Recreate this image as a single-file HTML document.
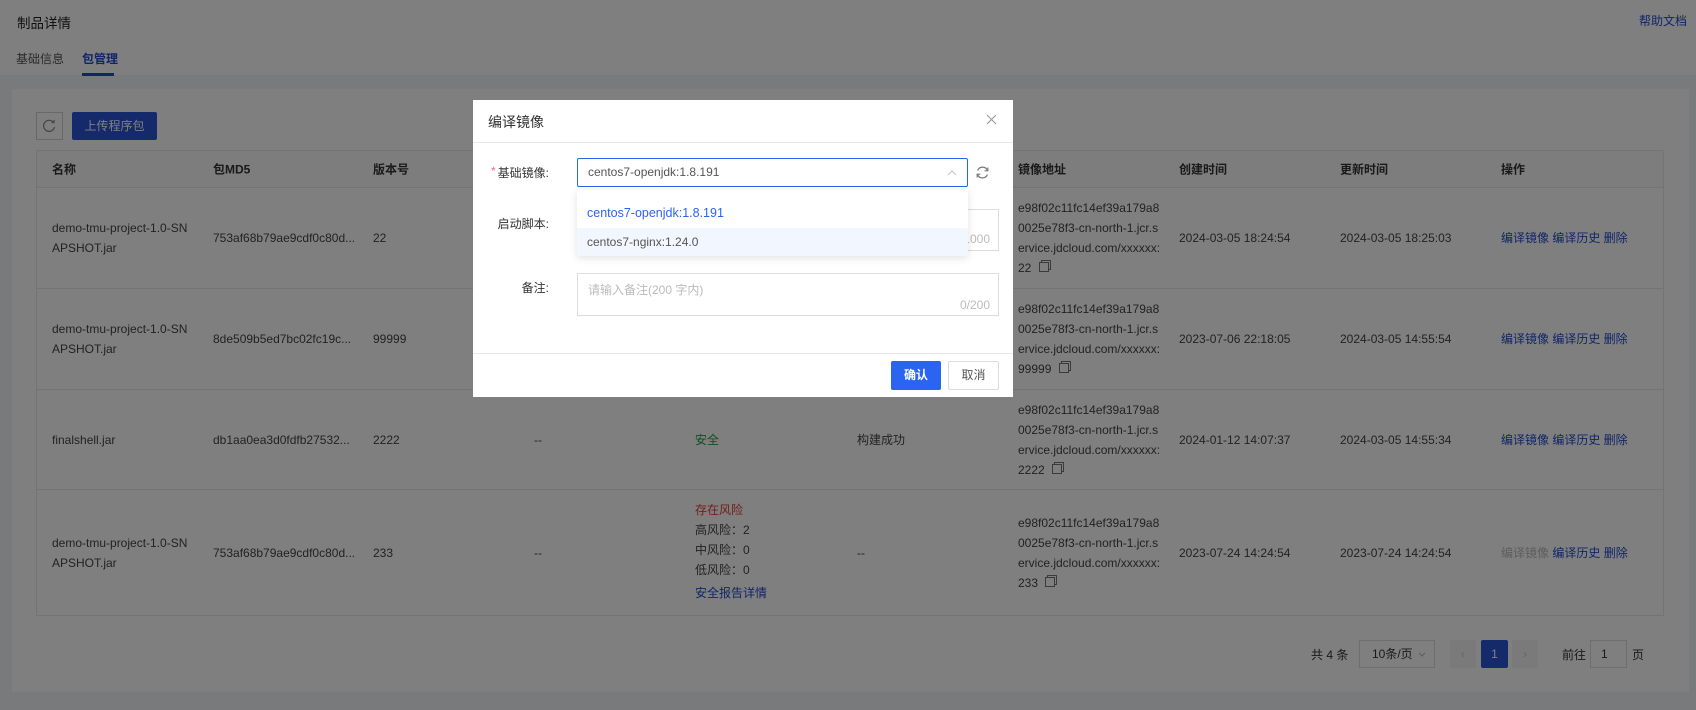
<!DOCTYPE html>
<html><head><meta charset="utf-8">
<style>
*{box-sizing:border-box;margin:0;padding:0}
body{width:1696px;height:710px;overflow:hidden;background:#f3f4f7;font-family:"Liberation Sans","Noto Sans CJK SC",sans-serif;font-size:12px;color:#333;position:relative}
.abs{position:absolute}
.hdr{left:0;top:0;width:1696px;height:75px;background:#fff}
.card{left:12px;top:89px;width:1677px;height:603px;background:#fff}
.tbl{left:36px;top:150px;width:1628px;height:466px;border:1px solid #e8e8e8}
.th{position:absolute;top:0;height:37px;width:1626px;background:#fafafa;border-bottom:1px solid #e8e8e8}
.cell{position:absolute;line-height:20px;color:#444;transform:translateY(-50%)}
.row{position:absolute;left:0;width:1626px;border-bottom:1px solid #e8e8e8}
.hc{position:absolute;top:18px;transform:translateY(-50%);font-weight:bold;color:#333}
.link{color:#1f4bd1}
.ov{left:0;top:0;width:1696px;height:710px;background:rgba(0,0,0,.5)}
.modal{left:473px;top:100px;width:540px;height:297px;background:#fff}
.ta{position:absolute;border:1px solid #dcdcdc;background:#fff}
</style></head><body>
<div class="abs hdr">
  <div class="abs" style="left:17px;top:12px;font-size:13.5px;color:#222">制品详情</div>
  <div class="abs link" style="right:9px;top:12px;font-size:12px">帮助文档</div>
  <div class="abs" style="left:16px;top:50px;color:#555">基础信息</div>
  <div class="abs link" style="left:82px;top:50px;font-weight:bold">包管理</div>
  <div class="abs" style="left:82px;top:73px;width:32px;height:3px;background:#1f4bd1"></div>
</div>
<div class="abs card"></div>
<div class="abs" style="left:36px;top:112px;width:27px;height:28px;border:1px solid #d0d0d0;background:#fff">
  <svg width="25" height="26" viewBox="0 0 25 26"><path d="M16.5 9.5 A5.5 5.5 0 1 0 17.5 14" fill="none" stroke="#888" stroke-width="1.2"/><path d="M14.5 9.5 H17 V7" fill="none" stroke="#888" stroke-width="1.2"/></svg>
</div>
<div class="abs" style="left:72px;top:112px;width:85px;height:28px;background:#2b55d6;color:#fff;border-radius:2px;text-align:center;line-height:28px">上传程序包</div>

<div class="abs tbl">
  <div class="th">
    <span class="hc" style="left:15px">名称</span><span class="hc" style="left:176px">包MD5</span><span class="hc" style="left:336px">版本号</span><span class="hc" style="left:981px">镜像地址</span><span class="hc" style="left:1142px">创建时间</span><span class="hc" style="left:1303px">更新时间</span><span class="hc" style="left:1464px">操作</span>
  </div>
  <div class="row" style="top:37px;height:101px">
    <div class="cell" style="left:15px;top:50px">demo-tmu-project-1.0-SN<br>APSHOT.jar</div>
    <div class="cell" style="left:176px;top:50px">753af68b79ae9cdf0c80d...</div>
    <div class="cell" style="left:336px;top:50px">22</div>
    <div class="cell" style="left:658px;top:50px;color:#19a14a">安全</div>
    <div class="cell" style="left:820px;top:50px">构建成功</div>
    <div class="cell" style="left:981px;top:50px">e98f02c11fc14ef39a179a8<br>0025e78f3-cn-north-1.jcr.s<br>ervice.jdcloud.com/xxxxxx:<br>22 <span style="display:inline-block;width:10px;height:10px;border:1px solid #777;margin-left:4px;box-shadow:2px -2px 0 -1px #fff,2px -2px 0 0 #777"></span></div>
    <div class="cell" style="left:1142px;top:50px">2024-03-05 18:24:54</div>
    <div class="cell" style="left:1303px;top:50px">2024-03-05 18:25:03</div>
    <div class="cell link" style="left:1464px;top:50px">编译镜像 编译历史 删除</div>
  </div>
  <div class="row" style="top:138px;height:101px">
    <div class="cell" style="left:15px;top:50px">demo-tmu-project-1.0-SN<br>APSHOT.jar</div>
    <div class="cell" style="left:176px;top:50px">8de509b5ed7bc02fc19c...</div>
    <div class="cell" style="left:336px;top:50px">99999</div>
    <div class="cell" style="left:658px;top:50px;color:#19a14a">安全</div>
    <div class="cell" style="left:820px;top:50px">构建成功</div>
    <div class="cell" style="left:981px;top:50px">e98f02c11fc14ef39a179a8<br>0025e78f3-cn-north-1.jcr.s<br>ervice.jdcloud.com/xxxxxx:<br>99999 <span style="display:inline-block;width:10px;height:10px;border:1px solid #777;margin-left:4px;box-shadow:2px -2px 0 -1px #fff,2px -2px 0 0 #777"></span></div>
    <div class="cell" style="left:1142px;top:50px">2023-07-06 22:18:05</div>
    <div class="cell" style="left:1303px;top:50px">2024-03-05 14:55:54</div>
    <div class="cell link" style="left:1464px;top:50px">编译镜像 编译历史 删除</div>
  </div>
  <div class="row" style="top:239px;height:100px">
    <div class="cell" style="left:15px;top:50px">finalshell.jar</div>
    <div class="cell" style="left:176px;top:50px">db1aa0ea3d0fdfb27532...</div>
    <div class="cell" style="left:336px;top:50px">2222</div>
    <div class="cell" style="left:497px;top:50px">--</div>
    <div class="cell" style="left:658px;top:50px;color:#19a14a">安全</div>
    <div class="cell" style="left:820px;top:50px">构建成功</div>
    <div class="cell" style="left:981px;top:50px">e98f02c11fc14ef39a179a8<br>0025e78f3-cn-north-1.jcr.s<br>ervice.jdcloud.com/xxxxxx:<br>2222 <span style="display:inline-block;width:10px;height:10px;border:1px solid #777;margin-left:4px;box-shadow:2px -2px 0 -1px #fff,2px -2px 0 0 #777"></span></div>
    <div class="cell" style="left:1142px;top:50px">2024-01-12 14:07:37</div>
    <div class="cell" style="left:1303px;top:50px">2024-03-05 14:55:34</div>
    <div class="cell link" style="left:1464px;top:50px">编译镜像 编译历史 删除</div>
  </div>
  <div class="row" style="top:339px;height:126px;border-bottom:none">
    <div class="cell" style="left:15px;top:63px">demo-tmu-project-1.0-SN<br>APSHOT.jar</div>
    <div class="cell" style="left:176px;top:63px">753af68b79ae9cdf0c80d...</div>
    <div class="cell" style="left:336px;top:63px">233</div>
    <div class="cell" style="left:497px;top:63px">--</div>
    <div class="cell" style="left:658px;top:63px"><span style="color:#e23c3c">存在风险</span><br>高风险：2<br>中风险：0<br>低风险：0<br><span class="link" style="line-height:26px">安全报告详情</span></div>
    <div class="cell" style="left:820px;top:63px">--</div>
    <div class="cell" style="left:981px;top:63px">e98f02c11fc14ef39a179a8<br>0025e78f3-cn-north-1.jcr.s<br>ervice.jdcloud.com/xxxxxx:<br>233 <span style="display:inline-block;width:10px;height:10px;border:1px solid #777;margin-left:4px;box-shadow:2px -2px 0 -1px #fff,2px -2px 0 0 #777"></span></div>
    <div class="cell" style="left:1142px;top:63px">2023-07-24 14:24:54</div>
    <div class="cell" style="left:1303px;top:63px">2023-07-24 14:24:54</div>
    <div class="cell" style="left:1464px;top:63px"><span style="color:#bbb">编译镜像</span> <span class="link">编译历史 删除</span></div>
  </div>
</div>

<div class="abs" style="left:1311px;top:646px;color:#333">共 4 条</div>
<div class="abs" style="left:1359px;top:640px;width:76px;height:28px;border:1px solid #dcdcdc;background:#fff;line-height:26px;padding-left:12px">10条/页<svg class="abs" style="right:8px;top:11px" width="8" height="5" viewBox="0 0 8 5"><path d="M1 1L4 4L7 1" fill="none" stroke="#bbb"/></svg></div>
<div class="abs" style="left:1450px;top:640px;width:26px;height:28px;background:#f4f4f5;color:#ccc;text-align:center;line-height:28px">‹</div>
<div class="abs" style="left:1481px;top:640px;width:27px;height:28px;background:#2b55d6;color:#fff;text-align:center;line-height:28px;border-radius:2px">1</div>
<div class="abs" style="left:1512px;top:640px;width:26px;height:28px;background:#f4f4f5;color:#ccc;text-align:center;line-height:28px">›</div>
<div class="abs" style="left:1562px;top:646px">前往</div>
<div class="abs" style="left:1590px;top:640px;width:37px;height:28px;border:1px solid #dcdcdc;background:#fff;line-height:26px;padding-left:10px">1</div>
<div class="abs" style="left:1632px;top:646px">页</div>

<div class="abs ov"></div>

<div class="abs modal">
  <div class="abs" style="left:15px;top:12px;font-size:14px;color:#333">编译镜像</div>
  <svg class="abs" style="left:513px;top:14px" width="11" height="11" viewBox="0 0 11 11"><path d="M1 1L10 10M10 1L1 10" stroke="#999" stroke-width="1.1"/></svg>
  <div class="abs" style="left:0;top:42px;width:540px;height:1px;background:#e8e8e8"></div>
  <div class="abs" style="left:18px;top:64px;color:#f56c6c">*</div>
  <div class="abs" style="left:0;top:64px;width:76px;text-align:right">基础镜像:</div>
  <div class="abs" style="left:0;top:115px;width:76px;text-align:right">启动脚本:</div>
  <div class="abs" style="left:0;top:179px;width:76px;text-align:right">备注:</div>
  <div class="ta" style="left:104px;top:109px;width:422px;height:42px"><span class="abs" style="right:8px;top:22px;color:#bbb">0/1000</span></div>
  <div class="ta" style="left:104px;top:173px;width:422px;height:43px"><span class="abs" style="left:10px;top:7px;color:#bbb">请输入备注(200 字内)</span><span class="abs" style="right:8px;top:24px;color:#bbb">0/200</span></div>
  <div class="abs" style="left:104px;top:58px;width:391px;height:29px;border:1px solid #2b64f0;border-radius:2px;background:#fff;line-height:27px;padding-left:10px;color:#555">centos7-openjdk:1.8.191<svg class="abs" style="right:10px;top:11px" width="10" height="6" viewBox="0 0 10 6"><path d="M1 5L5 1L9 5" fill="none" stroke="#c0c4cc" stroke-width="1"/></svg></div>
  <svg class="abs" style="left:502px;top:65px" width="15" height="15" viewBox="0 0 15 15"><path d="M12.5 5.5A5.3 5.3 0 0 0 2.6 5.5M2.5 9.5A5.3 5.3 0 0 0 12.4 9.5" fill="none" stroke="#777" stroke-width="1.2"/><path d="M12.8 2.5V5.8H9.6M2.2 12.5V9.2H5.4" fill="none" stroke="#777" stroke-width="1.2"/></svg>
  <div class="abs" style="left:104px;top:90px;width:391px;height:66px;background:#fff;box-shadow:0 2px 8px rgba(0,0,0,.12)">
    <div class="abs" style="left:10px;top:16px;color:#2b64f0;font-size:12.5px">centos7-openjdk:1.8.191</div>
    <div class="abs" style="left:0;top:38px;width:391px;height:28px;background:#f2f6fe"><span class="abs" style="left:10px;top:7px;color:#555">centos7-nginx:1.24.0</span></div>
  </div>
  <div class="abs" style="left:0;top:253px;width:540px;height:1px;background:#e8e8e8"></div>
  <div class="abs" style="left:418px;top:261px;width:50px;height:29px;background:#2b64f0;color:#fff;text-align:center;line-height:29px;border-radius:2px;font-weight:bold">确认</div>
  <div class="abs" style="left:475px;top:261px;width:51px;height:29px;border:1px solid #dcdcdc;color:#555;text-align:center;line-height:27px;border-radius:2px">取消</div>
</div>
</body></html>
